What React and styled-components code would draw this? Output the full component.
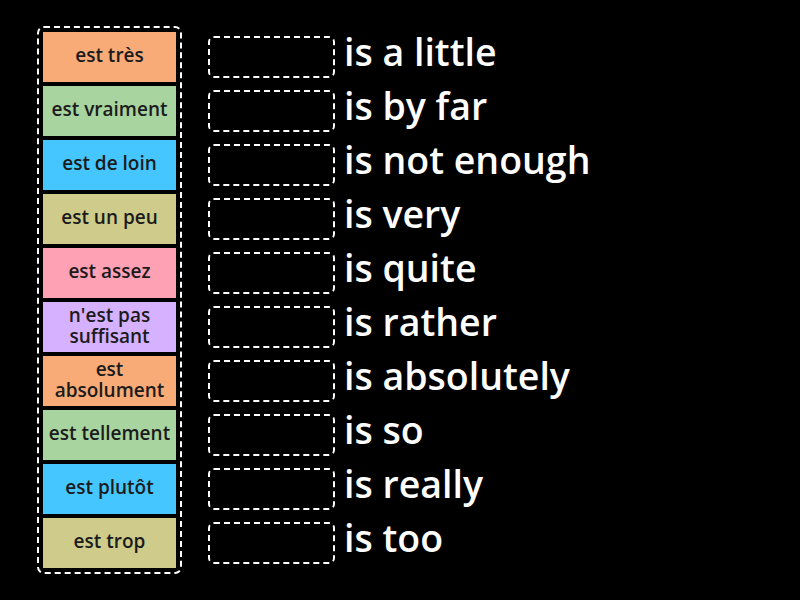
import styled, { createGlobalStyle } from "styled-components";

const GlobalStyle = createGlobalStyle`
  html, body {
    margin: 0;
    padding: 0;
    background: #000;
  }
  body {
    font-family: "Open Sans", "Noto Sans", sans-serif;
  }
`;

const Page = styled.div`
  width: 800px;
  height: 600px;
  background: #000;
  display: flex;
  align-items: flex-start;
  padding: 26px 0 0 37px;
  box-sizing: border-box;
  gap: 26px;
`;

const Bank = styled.div`
  border: 2px dashed #fff;
  border-radius: 7px;
  padding: 4px;
  display: flex;
  flex-direction: column;
  gap: 4px;
`;

const Card = styled.div`
  width: 133px;
  height: 50px;
  background: ${(p) => p.color};
  display: flex;
  align-items: center;
  justify-content: center;
  text-align: center;
  font-size: 19px;
  font-weight: 600;
  line-height: 21px;
  color: #1b1b1b;
  box-sizing: border-box;
  padding: 0 2px 3px;
`;

const Targets = styled.div`
  display: flex;
  flex-direction: column;
  gap: 4px;
  padding-top: 6px;
`;

const Row = styled.div`
  height: 50px;
  display: flex;
  align-items: center;
  gap: 9px;
`;

const Slot = styled.div`
  width: 127px;
  height: 42px;
  border: 2px dashed #fff;
  border-radius: 6px;
  box-sizing: border-box;
`;

const Label = styled.div`
  color: #fff;
  font-size: 37.5px;
  font-weight: 600;
  line-height: 1;
  padding-bottom: 11px;
  white-space: nowrap;
`;

const cards = [
  { text: "est très", color: "#f8aa77" },
  { text: "est vraiment", color: "#a8d4a0" },
  { text: "est de loin", color: "#45c6ff" },
  { text: "est un peu", color: "#cfcc8b" },
  { text: "est assez", color: "#ffa1b5" },
  { text: "n'est pas suffisant", color: "#d5b1ff" },
  { text: "est absolument", color: "#f8aa77" },
  { text: "est tellement", color: "#a8d4a0" },
  { text: "est plutôt", color: "#45c6ff" },
  { text: "est trop", color: "#cfcc8b" },
];

const labels = [
  "is a little",
  "is by far",
  "is not enough",
  "is very",
  "is quite",
  "is rather",
  "is absolutely",
  "is so",
  "is really",
  "is too",
];

export default function App() {
  return (
    <>
      <GlobalStyle />
      <Page>
        <Bank>
          {cards.map((c) => (
            <Card key={c.text} color={c.color}>
              {c.text}
            </Card>
          ))}
        </Bank>
        <Targets>
          {labels.map((l) => (
            <Row key={l}>
              <Slot />
              <Label>{l}</Label>
            </Row>
          ))}
        </Targets>
      </Page>
    </>
  );
}
